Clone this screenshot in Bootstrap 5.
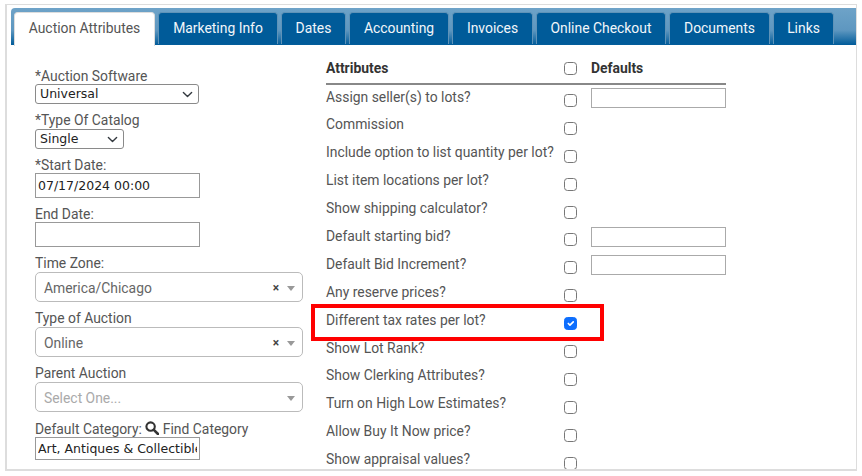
<!DOCTYPE html>
<html lang="en">
<head>
<meta charset="utf-8">
<title>Auction Attributes</title>
<link href="https://cdn.jsdelivr.net/npm/bootstrap@5.3.0/dist/css/bootstrap.min.css" rel="stylesheet">
<style>
html,body{margin:0;height:476px;overflow:hidden;background:#fff;}
body{font-family:Roboto,"Liberation Sans",sans-serif;font-size:13.9px;color:#555;}
.frame{position:relative;margin:4px 0 0 5px;width:852px;height:467px;border:1px solid #ddd;border-left-width:2px;border-bottom-width:2px;padding:3px 0 0 4px;overflow:hidden;}
.tabbar{height:37px;background:linear-gradient(#6ea3c8 0,#5e97c0 60%,#005b99 100%);border-radius:4px 0 0 0;padding:4px 0 0 3px;gap:3px;border:0;flex-wrap:nowrap;margin-right:0;}
.tabbar .nav-link{height:32px;line-height:30px;padding:0;text-align:center;color:#f2f6fa;background:#005b99;border:1px solid #5f93b8;border-bottom:0;border-radius:4px 4px 0 0;font-size:13.9px;margin:0;}
.tabbar .nav-link.active{height:34px;background:#fff;color:#555;border-color:#ddd;}
.t1{width:141px}.t2{width:120px}.t3{width:65px}.t4{width:100px}.t5{width:81px}.t6{width:130px}.t7{width:101px}.t8{width:61px}
.panes{padding-left:24px;}
.leftcol{width:291px;padding-top:24px;flex:none;}
.fld{margin-bottom:9px;}
.fld label,.lbl{display:block;line-height:15px;height:16px;margin:0;white-space:nowrap;}
.pick{width:164px;height:20px;margin-top:-1px;padding:0 0 0 4px;background-position:right 4px center;background-size:13px 11px;border:1px solid #8a8a8a;border-radius:3px;font-family:"DejaVu Sans",sans-serif;font-size:12.5px;color:#222;line-height:18px;}
.pick.narrow{width:89px;margin-top:0;}
.boxin{width:165px;height:25px;border:1px solid #999;border-radius:0;padding:0 2px;margin-top:-1px;font-family:"DejaVu Sans",sans-serif;font-size:12.5px;color:#222;min-height:0;}
.boxin.short{height:23px;margin-top:0;}
.sel2{width:268px;height:30px;border:1px solid #bbb;border-radius:5px;padding:2px 6px 0 8px;color:#666;background:#fff;}
.sel2 .ph{color:#aaa;}
.clr{font-size:12px;font-weight:700;color:#444;margin-right:7px;line-height:1;}
.tri{width:0;height:0;border-left:4.5px solid transparent;border-right:4.5px solid transparent;border-top:5px solid #999;margin:0 1px;}
.rightcol{width:400px;padding-top:14px;flex:none;}
.headrow{height:26px;border-bottom:2px solid #888;color:#333;font-weight:700;line-height:18px;}
.cellname{width:238px;flex:none;white-space:nowrap;}
.cellchk{width:27px;flex:none;}
.attr{height:27.9px;}
.attr .cellname{padding-top:2.5px;line-height:18px;}
.attr .cellchk{padding-top:9px;}
.chk{width:13px;height:13px;margin:0;display:block;border:1.3px solid #777;border-radius:3px;float:none;}
.headrow .chk{margin-top:3px;}
.defin{width:135px;height:20px;margin-top:3px;border:1px solid #aaa;border-radius:0;padding:0 3px;min-height:0;}
.redmark{position:absolute;left:304px;top:299px;width:293px;height:37px;border:4px solid #f00;pointer-events:none;}
.mag{vertical-align:-1px;margin:0;}
</style>
</head>
<body>
<div class="frame">
  <ul class="nav nav-tabs tabbar">
    <li class="nav-item"><a class="nav-link active t1" href="#">Auction Attributes</a></li>
    <li class="nav-item"><a class="nav-link t2" href="#">Marketing Info</a></li>
    <li class="nav-item"><a class="nav-link t3" href="#">Dates</a></li>
    <li class="nav-item"><a class="nav-link t4" href="#">Accounting</a></li>
    <li class="nav-item"><a class="nav-link t5" href="#">Invoices</a></li>
    <li class="nav-item"><a class="nav-link t6" href="#">Online Checkout</a></li>
    <li class="nav-item"><a class="nav-link t7" href="#">Documents</a></li>
    <li class="nav-item"><a class="nav-link t8" href="#">Links</a></li>
  </ul>
  <div class="d-flex panes">
    <div class="leftcol">
      <div class="fld"><label>*Auction Software</label>
        <select class="form-select pick"><option>Universal</option></select></div>
      <div class="fld"><label>*Type Of Catalog</label>
        <select class="form-select pick narrow"><option>Single</option></select></div>
      <div class="fld"><label>*Start Date:</label>
        <input class="form-control boxin" value="07/17/2024 00:00"></div>
      <div class="fld"><label>End Date:</label>
        <input class="form-control boxin"></div>
      <div class="fld"><label>Time Zone:</label>
        <div class="sel2 d-flex align-items-center"><span class="flex-grow-1">America/Chicago</span><span class="clr">×</span><span class="tri"></span></div></div>
      <div class="fld"><label>Type of Auction</label>
        <div class="sel2 d-flex align-items-center"><span class="flex-grow-1">Online</span><span class="clr">×</span><span class="tri"></span></div></div>
      <div class="fld"><label>Parent Auction</label>
        <div class="sel2 d-flex align-items-center"><span class="flex-grow-1 ph">Select One...</span><span class="tri"></span></div></div>
      <div class="fld"><div class="lbl">Default Category:
        <svg class="mag" width="14" height="14" viewBox="0 0 14 14"><circle cx="5.6" cy="5.6" r="4.2" fill="none" stroke="#333" stroke-width="2.1"/><path d="M8.8 8.8 13 13" stroke="#333" stroke-width="2.6" stroke-linecap="round"/></svg>
        Find Category</div>
        <input class="form-control boxin short" value="Art, Antiques &amp; Collectibles"></div>
    </div>
    <div class="rightcol">
      <div class="d-flex align-items-start headrow">
        <div class="cellname">Attributes</div>
        <div class="cellchk"><input class="form-check-input chk" type="checkbox"></div>
        <div>Defaults</div>
      </div>
      <div class="d-flex attr"><div class="cellname">Assign seller(s) to lots?</div><div class="cellchk"><input class="form-check-input chk" type="checkbox"></div><input class="form-control defin"></div>
      <div class="d-flex attr"><div class="cellname">Commission</div><div class="cellchk"><input class="form-check-input chk" type="checkbox"></div></div>
      <div class="d-flex attr"><div class="cellname">Include option to list quantity per lot?</div><div class="cellchk"><input class="form-check-input chk" type="checkbox"></div></div>
      <div class="d-flex attr"><div class="cellname">List item locations per lot?</div><div class="cellchk"><input class="form-check-input chk" type="checkbox"></div></div>
      <div class="d-flex attr"><div class="cellname">Show shipping calculator?</div><div class="cellchk"><input class="form-check-input chk" type="checkbox"></div></div>
      <div class="d-flex attr"><div class="cellname">Default starting bid?</div><div class="cellchk"><input class="form-check-input chk" type="checkbox"></div><input class="form-control defin"></div>
      <div class="d-flex attr"><div class="cellname">Default Bid Increment?</div><div class="cellchk"><input class="form-check-input chk" type="checkbox"></div><input class="form-control defin"></div>
      <div class="d-flex attr"><div class="cellname">Any reserve prices?</div><div class="cellchk"><input class="form-check-input chk" type="checkbox"></div></div>
      <div class="d-flex attr"><div class="cellname">Different tax rates per lot?</div><div class="cellchk"><input class="form-check-input chk" type="checkbox" checked></div></div>
      <div class="d-flex attr"><div class="cellname">Show Lot Rank?</div><div class="cellchk"><input class="form-check-input chk" type="checkbox"></div></div>
      <div class="d-flex attr"><div class="cellname">Show Clerking Attributes?</div><div class="cellchk"><input class="form-check-input chk" type="checkbox"></div></div>
      <div class="d-flex attr"><div class="cellname">Turn on High Low Estimates?</div><div class="cellchk"><input class="form-check-input chk" type="checkbox"></div></div>
      <div class="d-flex attr"><div class="cellname">Allow Buy It Now price?</div><div class="cellchk"><input class="form-check-input chk" type="checkbox"></div></div>
      <div class="d-flex attr"><div class="cellname">Show appraisal values?</div><div class="cellchk"><input class="form-check-input chk" type="checkbox"></div></div>
    </div>
  </div>
  <div class="redmark"></div>
</div>
<script src="https://cdn.jsdelivr.net/npm/bootstrap@5.3.0/dist/js/bootstrap.bundle.min.js"></script>
</body>
</html>
